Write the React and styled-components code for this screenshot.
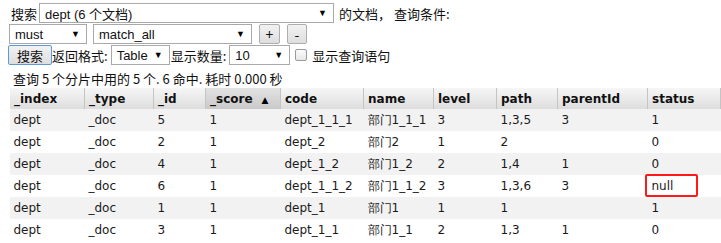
import React from "react";
import styled, { createGlobalStyle } from "styled-components";

const GlobalStyle = createGlobalStyle`
    body {
        margin: 0;
        background: #ffffff;
        font-family: "Liberation Sans", "Noto Sans CJK SC", sans-serif;
        font-size: 13px;
        color: #111111;
    }
`;

const Page = styled.div`
    padding: 3px 0 0 9px;
    width: 712px;
`;

const Line = styled.div`
    display: flex;
    align-items: center;
    height: 20px;
    gap: ${(props) => props.gap || 0}px;
    margin-top: ${(props) => props.top || 0}px;
`;

const Label = styled.span`
    font-family: "Noto Sans CJK SC", sans-serif;
    font-size: 13px;
    white-space: nowrap;
    margin-left: ${(props) => props.ml || 0}px;
    margin-right: ${(props) => props.mr || 0}px;
`;

const SelectBox = styled.div`
    box-sizing: border-box;
    display: flex;
    align-items: center;
    justify-content: space-between;
    width: ${(props) => props.width}px;
    height: 20px;
    border: 1px solid #a9a9a9;
    background: #ffffff;
    padding: 0 6px 0 5px;
    font-size: 13px;
    margin-left: ${(props) => props.ml || 0}px;
    white-space: nowrap;

    & > span:first-child {
        font-family: "Liberation Sans", "Noto Sans CJK SC", sans-serif;
    }
`;

const Arrow = styled.span`
    font-size: 9px;
    line-height: 1;
    color: #000000;
`;

const SmallButton = styled.div`
    box-sizing: border-box;
    width: ${(props) => props.width}px;
    height: 20px;
    margin-left: ${(props) => props.ml || 0}px;
    border: 1px solid ${(props) => (props.focus ? "#5b9bd5" : "#adadad")};
    border-radius: 2px;
    background: linear-gradient(#f2f2f2, #dedede);
    display: flex;
    align-items: center;
    justify-content: center;
    font-family: "Noto Sans CJK SC", sans-serif;
    font-size: ${(props) => props.fs || 13}px;
    color: #111111;
`;

const Check = styled.div`
    box-sizing: border-box;
    width: 12px;
    height: 12px;
    border: 1px solid #9a9a9a;
    border-radius: 2px;
    background: linear-gradient(#fcfcfc, #e8e8e8);
    margin: 0 5px 0 5px;
`;

const Stats = styled.div`
    margin: 5px 0 0 4px;
    height: 17px;
    font-family: "Noto Sans CJK SC", sans-serif;
    font-size: 13px;
    line-height: 17px;
`;

const Table = styled.table`
    border-collapse: collapse;
    table-layout: fixed;
    width: 711px;
    margin-top: 1px;
    font-family: "DejaVu Sans", Verdana, sans-serif;
    font-size: 12px;
`;

const Th = styled.th`
    height: 21px;
    padding: 0 0 0 4px;
    text-align: left;
    font-weight: bold;
    color: #111111;
    background: ${(props) =>
        props.sorted
            ? "linear-gradient(#e2e2e2, #c9c9c9)"
            : "linear-gradient(#f6f6f6, #dddddd)"};
    border-left: 1px solid #ffffff;
    border-right: 1px solid #c4c4c4;
    white-space: nowrap;
`;

const Row = styled.tr`
    background: ${(props) => (props.odd ? "#f2f2f2" : "#ffffff")};
`;

const Td = styled.td`
    height: 22px;
    padding: 0 0 0 4px;
    white-space: nowrap;
    color: #1a1a1a;
    position: relative;
`;

const Mark = styled.span`
    position: absolute;
    left: -3px;
    top: -1px;
    width: 53px;
    height: 23px;
    box-sizing: border-box;
    border: 2px solid #ff1a1a;
    border-radius: 2px;
`;

const columns = [
    ["_index", 75],
    ["_type", 69],
    ["_id", 52],
    ["_score", 75],
    ["code", 83],
    ["name", 70],
    ["level", 63],
    ["path", 61],
    ["parentId", 90],
    ["status", 73],
];

const rows = [
    ["dept", "_doc", "5", "1", "dept_1_1_1", "部门1_1_1", "3", "1,3,5", "3", "1"],
    ["dept", "_doc", "2", "1", "dept_2", "部门2", "1", "2", "", "0"],
    ["dept", "_doc", "4", "1", "dept_1_2", "部门1_2", "2", "1,4", "1", "0"],
    ["dept", "_doc", "6", "1", "dept_1_1_2", "部门1_1_2", "3", "1,3,6", "3", "null"],
    ["dept", "_doc", "1", "1", "dept_1", "部门1", "1", "1", "", "1"],
    ["dept", "_doc", "3", "1", "dept_1_1", "部门1_1", "2", "1,3", "1", "0"],
];

const App = () => {
    return (
        <Page>
            <GlobalStyle />
            <Line>
                <Label ml={2} mr={2}>搜索</Label>
                <SelectBox width={295}>
                    <span>dept (6 个文档)</span>
                    <Arrow>▼</Arrow>
                </SelectBox>
                <Label ml={5}>的文档， 查询条件:</Label>
            </Line>
            <Line top={1}>
                <SelectBox width={78}>
                    <span>must</span>
                    <Arrow>▼</Arrow>
                </SelectBox>
                <SelectBox width={159} ml={6}>
                    <span>match_all</span>
                    <Arrow>▼</Arrow>
                </SelectBox>
                <SmallButton width={21} ml={7} fs={14}>+</SmallButton>
                <SmallButton width={20} ml={7} fs={14}>-</SmallButton>
            </Line>
            <Line top={1}>
                <SmallButton width={44} ml={-1} focus>搜索</SmallButton>
                <Label>返回格式:</Label>
                <SelectBox width={59} ml={3}>
                    <span>Table</span>
                    <Arrow>▼</Arrow>
                </SelectBox>
                <Label ml={1}>显示数量:</Label>
                <SelectBox width={61} ml={3}>
                    <span>10</span>
                    <Arrow>▼</Arrow>
                </SelectBox>
                <Check />
                <Label>显示查询语句</Label>
            </Line>
            <Stats>查询 5 个分片中用的 5 个. 6 命中. 耗时 0.000 秒</Stats>
            <Table>
                <colgroup>
                    {columns.map(([name, width]) => (
                        <col key={name} style={{ width }} />
                    ))}
                </colgroup>
                <thead>
                    <tr>
                        {columns.map(([name]) => (
                            <Th key={name} sorted={name === "_score"}>
                                {name}
                                {name === "_score" ? <Arrow style={{ marginLeft: 9 }}>▲</Arrow> : null}
                            </Th>
                        ))}
                    </tr>
                </thead>
                <tbody>
                    {rows.map((row, i) => (
                        <Row key={i} odd={i % 2 === 0}>
                            {row.map((cell, j) => (
                                <Td key={j}>
                                    {cell}
                                    {cell === "null" ? <Mark /> : null}
                                </Td>
                            ))}
                        </Row>
                    ))}
                </tbody>
            </Table>
        </Page>
    );
};

export default App;
